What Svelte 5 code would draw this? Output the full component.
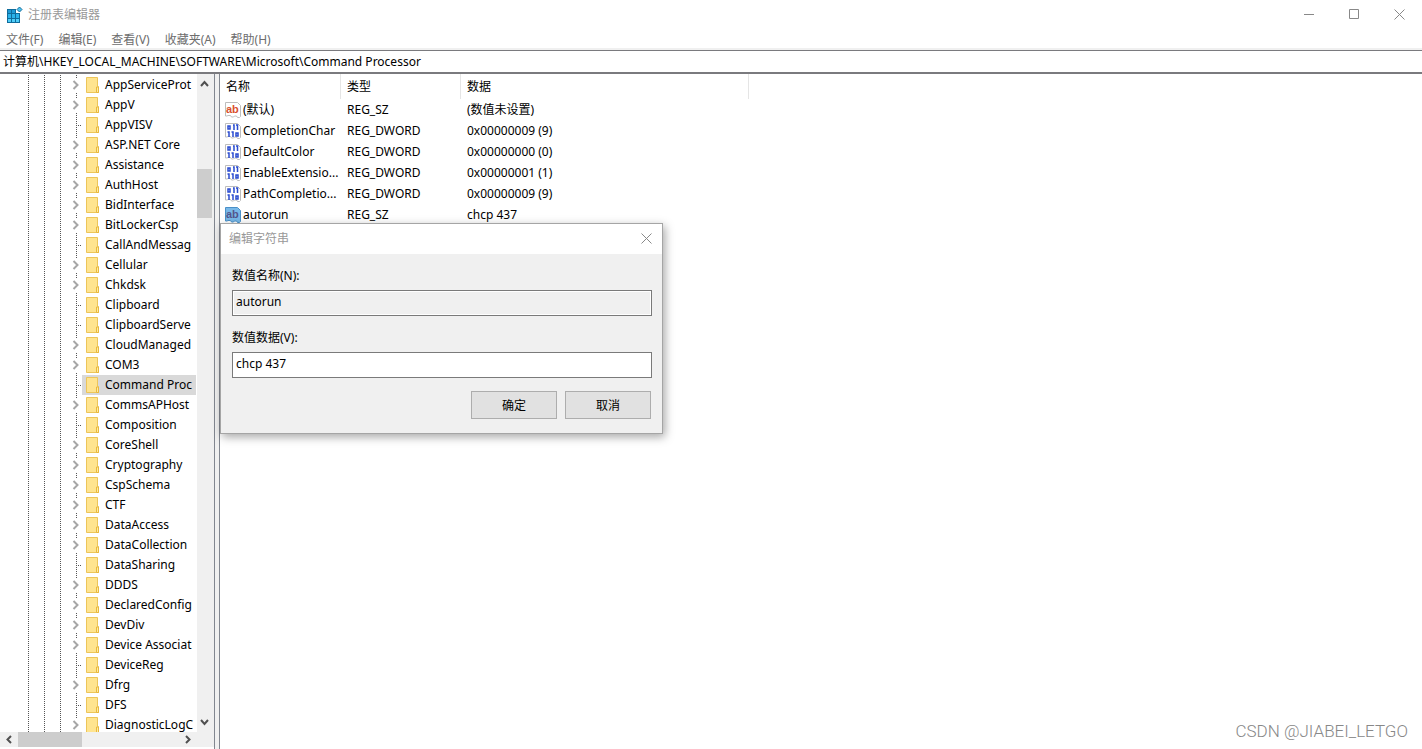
<script>
  const menus = ['文件(F)', '编辑(E)', '查看(V)', '收藏夹(A)', '帮助(H)'];

  const keys = [
    ['AppServiceProt', true],
    ['AppV', true],
    ['AppVISV', false],
    ['ASP.NET Core', true],
    ['Assistance', true],
    ['AuthHost', true],
    ['BidInterface', true],
    ['BitLockerCsp', true],
    ['CallAndMessag', false],
    ['Cellular', true],
    ['Chkdsk', true],
    ['Clipboard', false],
    ['ClipboardServe', false],
    ['CloudManaged', true],
    ['COM3', true],
    ['Command Proc', false],
    ['CommsAPHost', true],
    ['Composition', false],
    ['CoreShell', true],
    ['Cryptography', true],
    ['CspSchema', true],
    ['CTF', true],
    ['DataAccess', true],
    ['DataCollection', true],
    ['DataSharing', false],
    ['DDDS', true],
    ['DeclaredConfig', true],
    ['DevDiv', true],
    ['Device Associat', true],
    ['DeviceReg', false],
    ['Dfrg', true],
    ['DFS', false],
    ['DiagnosticLogC', true]
  ];
  const selectedKey = 'Command Proc';

  const values = [
    { name: '(默认)', type: 'REG_SZ', data: '(数值未设置)' },
    { name: 'CompletionChar', type: 'REG_DWORD', data: '0x00000009 (9)' },
    { name: 'DefaultColor', type: 'REG_DWORD', data: '0x00000000 (0)' },
    { name: 'EnableExtensio...', type: 'REG_DWORD', data: '0x00000001 (1)' },
    { name: 'PathCompletio...', type: 'REG_DWORD', data: '0x00000009 (9)' },
    { name: 'autorun', type: 'REG_SZ', data: 'chcp 437', selected: true }
  ];

  let path = $state('计算机\\HKEY_LOCAL_MACHINE\\SOFTWARE\\Microsoft\\Command Processor');
  let valueData = $state('chcp 437');
</script>

<div class="window">
  <header class="titlebar">
    <svg class="app-icon" width="18" height="18" viewBox="0 0 18 18" aria-hidden="true">
      <path d="M2 3h9v4h4v10H2z" fill="#0f6c9c" />
      <path d="M3 4h3v3H3zM7 4h3v3H7z" fill="#1f9ad6" />
      <path d="M3 8h3v4H3zM7 8h3v4H7zM11 8h3v4h-3z" fill="#2cb3ea" />
      <path d="M3 13h3v3H3zM7 13h3v3H7zM11 13h3v3h-3z" fill="#4fcdf8" />
      <path d="M14.500 1l2.500 2.500-2.500 2.500L12 3.500z" fill="#4fc4f0" stroke="#0f6c9c" />
    </svg>
    <h1>注册表编辑器</h1>
    <div class="controls">
      <button aria-label="最小化"><svg width="11" height="11"><path d="M0 5.500h10" /></svg></button>
      <button aria-label="最大化"><svg width="11" height="11"><path d="M.5.5h9v9h-9z" /></svg></button>
      <button aria-label="关闭"><svg width="11" height="11"><path d="M.5.5l10 10M10.500.5l-10 10" /></svg></button>
    </div>
  </header>

  <nav class="menubar">
    {#each menus as menu}
      <button>{menu}</button>
    {/each}
  </nav>

  <input class="address" aria-label="地址" bind:value={path} />

  <main>
    <section class="tree-pane">
      <div class="tree-main">
        <ul class="tree">
          {#each keys as [name, expandable]}
            <li>
              <svg class="guides" width="82" height="20" aria-hidden="true">
                <path class="dots" d="M28.500 0v20M44.500 0v20M60.500 0v20" />
                {#if expandable}
                  <path class="dots" d="M76.500 0v3M76.500 18v2" />
                  <path class="chevron" d="M73.500 6l4 4-4 4" />
                {:else}
                  <path class="dots" d="M76.500 0v20M78 10.500h5" />
                {/if}
              </svg>
              <span class="key" class:selected={name === selectedKey}>
                <svg width="14" height="16" viewBox="0 0 14 16" aria-hidden="true">
                  <path d="M.5.5h11v9h1v6H.5z" fill="#ffe48f" stroke="#ecc55a" />
                  <path d="M10.500 15.500v-5.500h2v5.500z" fill="#ffe9a6" stroke="#e8b93c" />
                </svg>
                <span>{name}</span>
              </span>
            </li>
          {/each}
        </ul>
        <div class="vbar">
          <svg width="15" height="18"><path d="M4 12l3.500-4 3.500 4" /></svg>
          <div class="vtrack"><div class="vthumb"></div></div>
          <svg width="15" height="18"><path d="M4 6l3.500 4 3.500-4" /></svg>
        </div>
      </div>
      <div class="hbar">
        <svg width="17" height="15"><path d="M10 4L6.500 7.500l3.500 3.500" /></svg>
        <div class="htrack"><div class="hthumb"></div></div>
        <svg width="17" height="15"><path d="M7 4l3.500 3.500L7 11" /></svg>
      </div>
    </section>

    <section class="list-pane">
      <table>
        <colgroup>
          <col class="c-name" /><col class="c-type" /><col class="c-data" /><col />
        </colgroup>
        <thead>
          <tr><th>名称</th><th>类型</th><th>数据</th><td></td></tr>
        </thead>
        <tbody>
          {#each values as v}
            <tr>
              <td>
                <div class="name">
                  <svg width="16" height="16" viewBox="0 0 16 16" aria-hidden="true">
                    <path
                      d="M.5.500h12l3 3v11l-1 1h-2l-1-1.500h-2l-1 1h-2l-1-1.500H3l-1 .5H.5z"
                      fill={v.selected ? '#78b8e8' : '#fff'}
                      stroke={v.selected ? '#4a90c8' : '#bdbdbd'}
                    />
                    {#if v.type === 'REG_SZ'}
                      <text class="ab" x="1" y="11" fill={v.selected ? '#54558c' : '#d9502e'}>ab</text>
                    {:else}
                      <path
                        d="M3 3h2v3H3zM8 2h1v5M11 2h1.500v5M2.500 9H4v5M6.500 9H8v5M11 10h2v3h-2z"
                        fill="none"
                        stroke="#2a4bd0"
                        stroke-width="1.500"
                      />
                    {/if}
                  </svg>
                  <span>{v.name}</span>
                </div>
              </td>
              <td>{v.type}</td>
              <td>{v.data}</td>
              <td></td>
            </tr>
          {/each}
        </tbody>
      </table>
    </section>
  </main>

  <div class="dialog" role="dialog" aria-labelledby="dialog-title">
    <div class="dialog-title">
      <h2 id="dialog-title">编辑字符串</h2>
      <button aria-label="关闭"><svg width="11" height="11"><path d="M.5.5l10 10M10.500.5l-10 10" /></svg></button>
    </div>
    <form onsubmit={(e) => e.preventDefault()}>
      <label for="value-name">数值名称(N):</label>
      <input id="value-name" value="autorun" readonly />
      <label for="value-data">数值数据(V):</label>
      <input id="value-data" bind:value={valueData} />
      <div class="actions">
        <button type="submit">确定</button>
        <button type="button">取消</button>
      </div>
    </form>
  </div>

  <div class="watermark">CSDN @JIABEI_LETGO</div>
</div>

<style>
  :global(body) {
    background: #fff;
  }

  .window,
  .window :is(button, input) {
    font-family: 'Noto Sans', 'Noto Sans CJK SC', sans-serif;
    font-size: 12px;
    color: #000;
  }

  .window {
    position: relative;
    display: flex;
    flex-direction: column;
    height: 100vh;
    overflow: hidden;
    line-height: 20px;
  }

  .window * {
    box-sizing: border-box;
  }

  .window button {
    padding: 0;
    border: 0;
    background: none;
  }

  h1,
  h2 {
    margin: 0;
    font-size: 12px;
    font-weight: 400;
    color: #999;
  }

  .titlebar {
    display: flex;
    align-items: center;
    height: 30px;
    flex: none;
    padding-left: 5px;
    gap: 5px;
  }

  .controls {
    display: flex;
    margin-left: auto;
  }

  .controls button {
    display: grid;
    place-items: center;
    width: 45px;
    height: 30px;
    padding-bottom: 2px;
  }

  .controls path,
  .dialog-title path {
    fill: none;
    stroke: #888;
  }

  .menubar {
    display: flex;
    gap: 15px;
    height: 20px;
    flex: none;
    padding-left: 6px;
    border-bottom: 2px solid #f0f0f0;
  }

  .window .menubar button {
    padding-top: 2px;
    color: #6d6d6d;
    line-height: 16px;
  }

  .address {
    flex: none;
    width: 100%;
    height: 24px;
    padding: 0 3px 2px;
    border: solid #7a7a7e;
    border-width: 1px 0 2px;
    background: #fff;
    outline: 0;
  }

  main {
    display: flex;
    flex: 1;
    min-height: 0;
  }

  .tree-pane {
    display: flex;
    flex-direction: column;
    flex: none;
    width: 215px;
    padding-bottom: 2px;
    border-right: 1px solid #828790;
  }

  .tree-main {
    display: flex;
    flex: 1;
    min-height: 0;
  }

  .tree {
    flex: 1;
    min-width: 0;
    margin: 0;
    padding: 1px 1px 0 0;
    overflow: hidden;
    list-style: none;
  }

  .tree li {
    display: flex;
    height: 20px;
  }

  .guides {
    flex: none;
  }

  .dots {
    fill: none;
    stroke: #555;
    stroke-dasharray: 1 1;
  }

  .chevron {
    fill: none;
    stroke: #a6a6a6;
    stroke-width: 2;
  }

  .key {
    display: flex;
    flex: 1;
    align-items: center;
    gap: 5px;
    min-width: 0;
    padding-left: 4px;
    white-space: nowrap;
  }

  .key svg {
    flex: none;
  }

  .key.selected {
    background: #d9d9d9;
  }

  .vbar {
    display: flex;
    flex-direction: column;
    width: 17px;
    padding-right: 2px;
    background: #f0f0f0;
  }

  .vbar svg,
  .hbar svg {
    flex: none;
  }

  .vbar path,
  .hbar path {
    fill: none;
    stroke: #505050;
    stroke-width: 2;
  }

  .vtrack {
    flex: 1;
    padding-top: 77px;
  }

  .vthumb {
    height: 49px;
    background: #cdcdcd;
  }

  .hbar {
    display: flex;
    height: 15px;
    padding: 0 18px 0 1px;
    background: #f0f0f0;
  }

  .htrack {
    flex: 1;
  }

  .hthumb {
    width: 64px;
    height: 15px;
    background: #cdcdcd;
  }

  .list-pane {
    flex: 1;
    min-width: 0;
    padding-left: 1px;
    border-left: 4px solid #f0f0f0;
    box-shadow: inset 1px 0 #828790;
  }

  table {
    width: 100%;
    table-layout: fixed;
    border-collapse: separate;
    border-spacing: 0;
  }

  .c-name {
    width: 121px;
  }

  .c-type {
    width: 120px;
  }

  .c-data {
    width: 288px;
  }

  th,
  td {
    height: 21px;
    padding: 0 0 0 6px;
    font-weight: 400;
    line-height: 20px;
    text-align: left;
    white-space: nowrap;
  }

  th {
    height: 25px;
    border-right: 1px solid #e5e5e5;
  }

  tbody td:first-child {
    padding-left: 5px;
  }

  .name {
    display: flex;
    align-items: center;
    gap: 2px;
  }

  .name svg {
    flex: none;
  }

  .ab {
    font: bold 11px 'Liberation Sans', sans-serif;
  }

  .dialog {
    position: absolute;
    left: 220px;
    top: 223px;
    width: 443px;
    border: 1px solid #a5a5a5;
    background: #f0f0f0;
    box-shadow: 2px 3px 9px rgba(0, 0, 0, 0.35);
  }

  .dialog-title {
    display: flex;
    align-items: center;
    justify-content: space-between;
    height: 30px;
    padding: 0 10px 0 8px;
    background: #fff;
  }

  .dialog-title button {
    display: grid;
    padding-bottom: 2px;
  }

  form {
    display: flex;
    flex-direction: column;
    padding: 12px 10px 14px 11px;
  }

  form input {
    height: 26px;
    margin: 4px 0 12px;
    padding: 0 3px 3px;
    border: 1px solid #7a7a7a;
    border-radius: 0;
    background: #fff;
    outline: 0;
  }

  form input[readonly] {
    background: #f0f0f0;
    box-shadow: inset 0 0 0 1px #fff;
  }

  .actions {
    display: flex;
    justify-content: flex-end;
    gap: 8px;
    padding: 1px 1px 0 0;
  }

  .window .actions button {
    width: 86px;
    height: 28px;
    border: 1px solid #adadad;
    background: #e1e1e1;
  }

  .watermark {
    position: absolute;
    right: 14px;
    bottom: 8px;
    font-family: Roboto, sans-serif;
    font-size: 17px;
    font-weight: 300;
    color: #888;
  }
</style>
